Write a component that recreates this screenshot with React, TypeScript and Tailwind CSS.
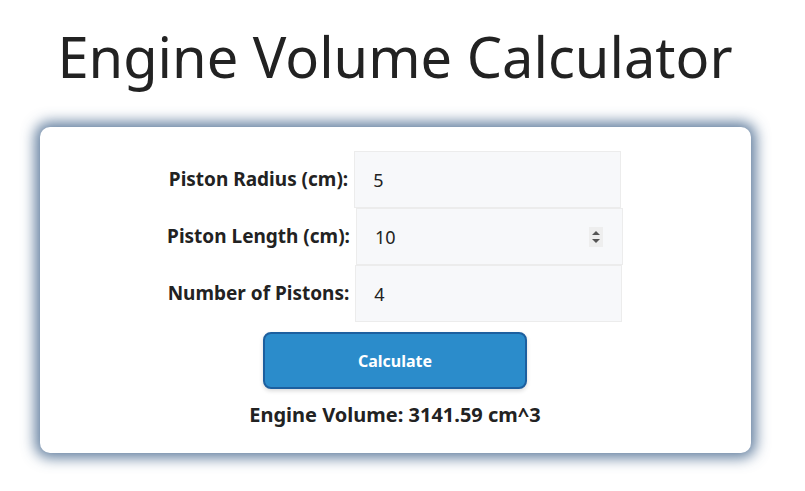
import { useState } from "react";

const FONT = { fontFamily: '"Noto Sans", "Open Sans", sans-serif' };

function Field({ label, value, onChange, spinner }: { label: string; value: string; onChange: (v: string) => void; spinner?: boolean }) {
  return (
    <div className="flex items-center justify-center">
      <label className="mr-[6px] text-[19px] font-bold text-[#222]">{label}</label>
      <div className="relative">
        <input
          type="text"
          value={value}
          onChange={(e) => onChange(e.target.value)}
          className="w-[267px] h-[57px] border border-[#ececec] bg-[#f7f8fa] pl-[18px] text-[18px] text-[#222] outline-none"
          style={FONT}
        />
        {spinner && (
          <div className="absolute right-[20px] top-[19px] flex h-[20px] w-[14px] flex-col items-center justify-center gap-[4px] bg-[#eeeeee]">
            <span className="h-0 w-0 border-x-[4px] border-b-[4px] border-x-transparent border-b-[#555]" />
            <span className="h-0 w-0 border-x-[4px] border-t-[4px] border-x-transparent border-t-[#555]" />
          </div>
        )}
      </div>
    </div>
  );
}

export default function App() {
  const [radius, setRadius] = useState("5");
  const [length, setLength] = useState("10");
  const [count, setCount] = useState("4");
  const [volume, setVolume] = useState(3141.59);

  const calc = () => {
    const r = parseFloat(radius) || 0;
    const l = parseFloat(length) || 0;
    const n = parseFloat(count) || 0;
    setVolume(Math.round(Math.PI * r * r * l * n * 100) / 100);
  };

  return (
    <div className="min-h-[491px] w-[790px] bg-white pt-[14px]" style={FONT}>
      <h1 className="text-center text-[56px] font-normal leading-[84px] text-[#222]">Engine Volume Calculator</h1>
      <div className="mx-auto mt-[29px] w-[711px] rounded-[10px] bg-white pt-[24px] pb-[24px] shadow-[0_0_14px_5px_rgba(60,95,135,0.8)]">
        <Field label="Piston Radius (cm):" value={radius} onChange={setRadius} />
        <Field label="Piston Length (cm):" value={length} onChange={setLength} spinner />
        <Field label="Number of Pistons:" value={count} onChange={setCount} />
        <div className="mt-[10px] flex justify-center">
          <button
            onClick={calc}
            className="h-[57px] w-[264px] rounded-[8px] border-2 border-[#1c5f9f] bg-[#2b8ccb] text-[16px] font-bold text-white shadow-[0_2px_4px_rgba(0,0,0,0.15)]"
          >
            Calculate
          </button>
        </div>
        <p className="mt-[12px] text-center text-[20px] font-bold leading-[28px] text-[#222]">Engine Volume: {volume} cm^3</p>
      </div>
    </div>
  );
}
